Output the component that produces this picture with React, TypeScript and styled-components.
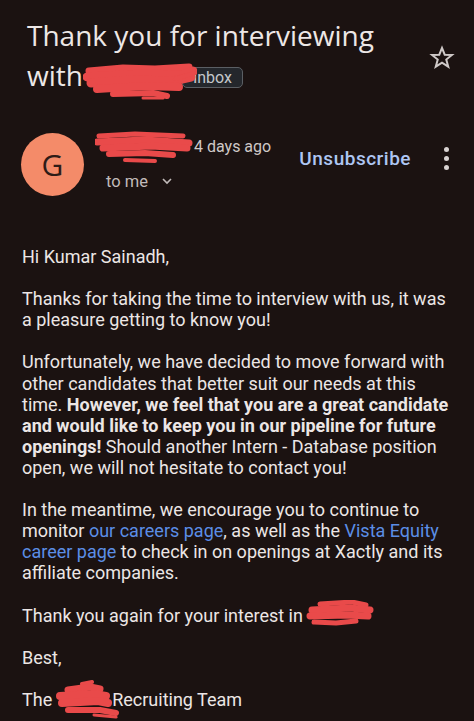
import React from "react";
import styled, { createGlobalStyle } from "styled-components";

const Global = createGlobalStyle`
  html, body { margin: 0; padding: 0; background: #1b1211; }
  * { box-sizing: border-box; }
`;

const Page = styled.div`
  width: 474px;
  height: 721px;
  overflow: hidden;
  background: #1b1211;
  display: flex;
  flex-direction: column;
  font-family: Roboto, "Liberation Sans", sans-serif;
  color: #ece6e5;
`;

const Header = styled.div`
  display: flex;
  align-items: flex-start;
  padding: 15px 17px 0 27px;
`;

const Title = styled.h1`
  flex: 1;
  margin: 0;
  font-family: "Open Sans", Roboto, sans-serif;
  font-weight: 400;
  font-size: 28px;
  line-height: 40px;
  color: #ede7e6;
  white-space: nowrap;
`;

const Chip = styled.span`
  display: inline-block;
  vertical-align: 3px;
  font-family: Roboto, sans-serif;
  font-size: 16px;
  line-height: 19px;
  padding: 0 10px 0 10px;
  border: 1.5px solid #5b5f64;
  border-radius: 5px;
  background: #24272c;
  color: #c4c7cb;
`;

/* Redaction mark drawn over text: a zero-height placeholder on the baseline
   with the scribble laid over neighbouring glyphs. */
const Mark = styled.span<{ $w: number; $ml?: number; $mr?: number }>`
  display: inline-block;
  position: relative;
  width: ${(p) => p.$w}px;
  height: 0;
  margin-left: ${(p) => p.$ml ?? 0}px;
  margin-right: ${(p) => p.$mr ?? 0}px;
  z-index: 1;
`;

const MarkSvg = styled.svg<{ $top: number }>`
  position: absolute;
  left: 0;
  top: ${(p) => p.$top}px;
  display: block;
`;

const StarButton = styled.div`
  width: 30px;
  height: 30px;
  margin-top: 27px;
  display: flex;
  align-items: center;
  justify-content: center;
`;

const SenderRow = styled.div`
  display: flex;
  align-items: flex-start;
  padding: 38px 21px 0 21px;
`;

const Avatar = styled.div`
  width: 63px;
  height: 63px;
  border-radius: 50%;
  background: #f48b69;
  color: #2e1c17;
  display: flex;
  align-items: center;
  justify-content: center;
  font-family: "Open Sans", sans-serif;
  font-size: 30px;
  flex-shrink: 0;
`;

const SenderInfo = styled.div`
  display: flex;
  flex-direction: column;
  margin-left: 11px;
  flex: 1;
`;

const NameLine = styled.div`
  height: 28px;
  line-height: 28px;
  font-size: 16px;
  color: #cfc8c7;
  white-space: nowrap;
`;

const ToMe = styled.div`
  display: flex;
  align-items: center;
  gap: 12px;
  margin: 10px 0 0 11px;
  height: 20px;
  font-size: 16.5px;
  color: #c2bbba;
`;

const Unsubscribe = styled.div`
  font-size: 19px;
  line-height: 22px;
  font-weight: 500;
  color: #aec6f3;
  margin-top: 15px;
  letter-spacing: 0.5px;
`;

const MoreButton = styled.div`
  width: 14px;
  margin-left: 28px;
  margin-top: 14px;
  display: flex;
  flex-direction: column;
  align-items: center;
  gap: 4px;
  span {
    width: 5px;
    height: 5px;
    border-radius: 50%;
    background: #d9d3d2;
  }
`;

const Body = styled.div`
  flex: 1;
  padding: 50px 10px 0 22px;
  font-size: 18px;
  line-height: 21.1px;
  color: #ece6e5;
`;

const Para = styled.p`
  margin: 0 0 21.1px 0;
  white-space: nowrap;
`;

const Link = styled.span`
  color: #5b8ee6;
`;

const BottomBar = styled.div`
  height: 9px;
  border-top: 2px solid #5d5858;
  background: #151010;
  flex-shrink: 0;
`;

const RED = "#e94a4a";

function TitleScribble() {
  return (
    <MarkSvg $top={-23} width="114" height="38" viewBox="0 0 114 38">
      <g fill="none" stroke={RED} strokeLinecap="round" strokeLinejoin="round">
        <path d="M6 8 L40 5 L72 6 L106 4" strokeWidth="7" />
        <path d="M4 14 L60 11 L98 12 L110 8" strokeWidth="9" />
        <path d="M8 20 L50 17 L90 18 L108 14" strokeWidth="9" />
        <path d="M14 26 L62 23 L96 24" strokeWidth="8" />
        <path d="M30 31 L70 30 L84 33" strokeWidth="6" />
        <path d="M60 35 L80 35" strokeWidth="3" />
        <path d="M92 16 L112 10" strokeWidth="4" />
      </g>
    </MarkSvg>
  );
}

function NameScribble() {
  return (
    <MarkSvg $top={-21} width="98" height="34" viewBox="0 0 98 34">
      <g fill="none" stroke={RED} strokeLinecap="round" strokeLinejoin="round">
        <path d="M4 5 L40 3 L88 5" strokeWidth="5" />
        <path d="M2 11 L50 9 L94 12" strokeWidth="7" />
        <path d="M8 17 L56 15 L92 17" strokeWidth="7" />
        <path d="M14 23 L50 22 L78 24" strokeWidth="6" />
        <path d="M30 29 L60 30" strokeWidth="4" />
      </g>
    </MarkSvg>
  );
}

function SmallScribble() {
  return (
    <MarkSvg $top={-22} width="68" height="28" viewBox="0 0 68 28">
      <g fill="none" stroke={RED} strokeLinecap="round" strokeLinejoin="round">
        <path d="M14 4 L46 2 L60 5" strokeWidth="5" />
        <path d="M6 10 L44 8 L64 10" strokeWidth="7" />
        <path d="M4 16 L40 15 L62 16" strokeWidth="7" />
        <path d="M8 22 L30 23 L50 21" strokeWidth="5" />
      </g>
    </MarkSvg>
  );
}

function TeamScribble() {
  return (
    <MarkSvg $top={-26} width="70" height="40" viewBox="0 0 70 40">
      <g fill="none" stroke={RED} strokeLinecap="round" strokeLinejoin="round">
        <path d="M28 4 L38 2" strokeWidth="4" />
        <path d="M14 10 L36 7 L46 9" strokeWidth="7" />
        <path d="M6 16 L40 14 L52 16" strokeWidth="8" />
        <path d="M8 23 L44 21 L54 23" strokeWidth="8" />
        <path d="M14 30 L46 30 L62 33" strokeWidth="6" />
        <path d="M40 35 L62 37" strokeWidth="3" />
      </g>
    </MarkSvg>
  );
}

export default function App() {
  return (
    <Page>
      <Global />
      <Header>
        <Title>
          Thank you for interviewing
          <br />
          with
          <Mark $w={110} $mr={-11}>
            <TitleScribble />
          </Mark>
          <Chip>Inbox</Chip>
        </Title>
        <StarButton>
          <svg width="26" height="25" viewBox="0 0 24 24">
            <path
              d="M12 2.8 L14.6 9.3 L21.6 9.6 L16.1 14 L18 20.8 L12 16.9 L6 20.8 L7.9 14 L2.4 9.6 L9.4 9.3 Z"
              fill="none"
              stroke="#cfc9c8"
              strokeWidth="1.9"
              strokeLinejoin="miter"
            />
          </svg>
        </StarButton>
      </Header>

      <SenderRow>
        <Avatar>G</Avatar>
        <SenderInfo>
          <NameLine>
            <Mark $w={95} $mr={4}>
              <NameScribble />
            </Mark>
            4 days ago
          </NameLine>
          <ToMe>
            to me
            <svg width="14" height="14" viewBox="0 0 14 14">
              <path d="M3 5 L7 9 L11 5" fill="none" stroke="#c2bbba" strokeWidth="1.6" />
            </svg>
          </ToMe>
        </SenderInfo>
        <Unsubscribe>Unsubscribe</Unsubscribe>
        <MoreButton>
          <span />
          <span />
          <span />
        </MoreButton>
      </SenderRow>

      <Body>
        <Para>Hi Kumar Sainadh,</Para>
        <Para>
          Thanks for taking the time to interview with us, it was
          <br />a pleasure getting to know you!
        </Para>
        <Para>
          Unfortunately, we have decided to move forward with
          <br />
          other candidates that better suit our needs at this
          <br />
          time. <b>However, we feel that you are a great candidate</b>
          <br />
          <b>and would like to keep you in our pipeline for future</b>
          <br />
          <b>openings!</b> Should another Intern - Database position
          <br />
          open, we will not hesitate to contact you!
        </Para>
        <Para>
          In the meantime, we encourage you to continue to
          <br />
          monitor <Link>our careers page</Link>, as well as the <Link>Vista Equity</Link>
          <br />
          <Link>career page</Link> to check in on openings at Xactly and its
          <br />
          affiliate companies.
        </Para>
        <Para>
          Thank you again for your interest in
          <Mark $w={68} $ml={3}>
            <SmallScribble />
          </Mark>
        </Para>
        <Para>Best,</Para>
        <Para>
          The
          <Mark $w={67} $ml={2} $mr={-9}>
            <TeamScribble />
          </Mark>
          Recruiting Team
        </Para>
      </Body>
      <BottomBar />
    </Page>
  );
}
